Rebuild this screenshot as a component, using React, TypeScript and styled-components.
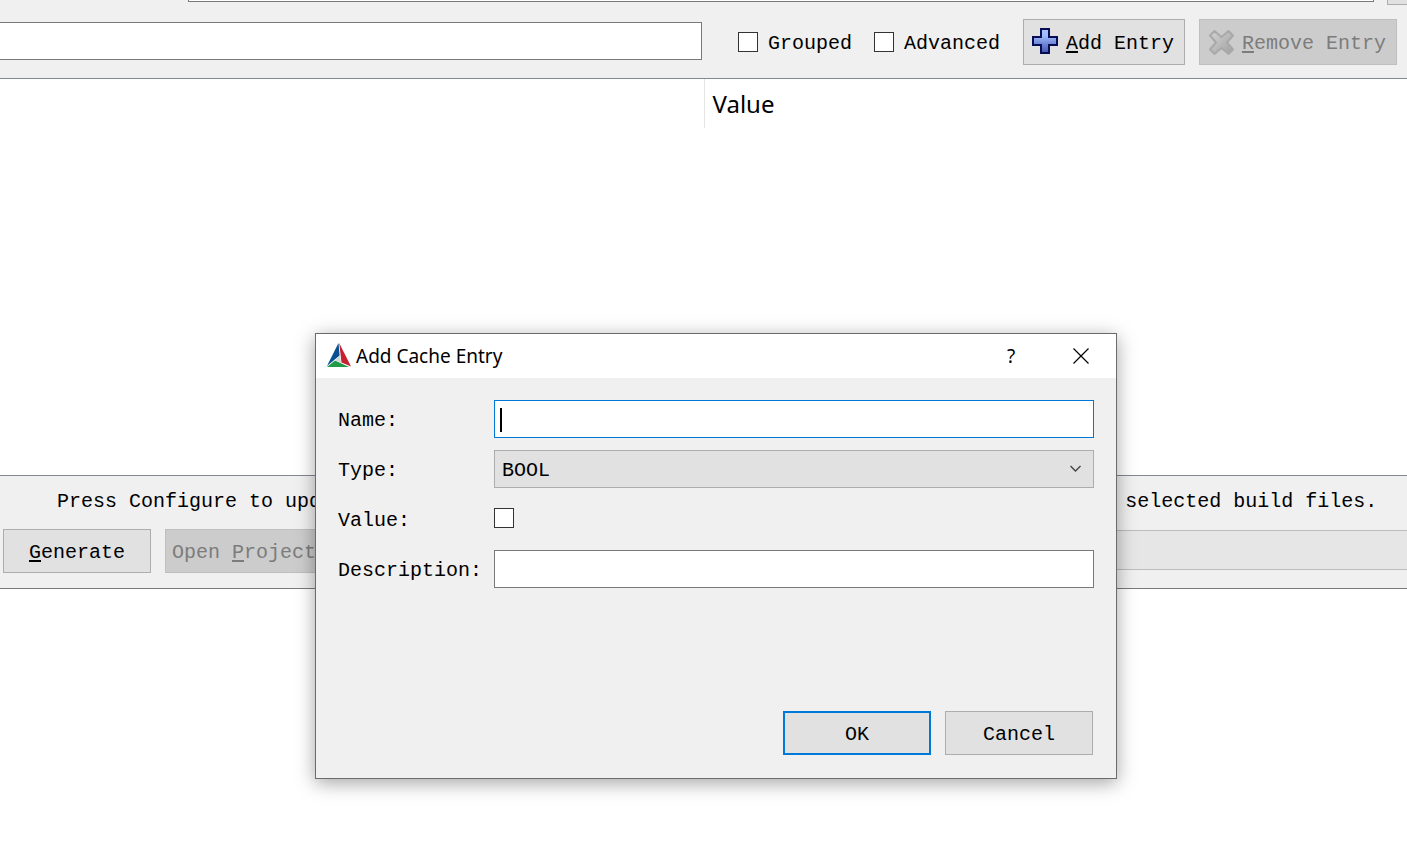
import React from 'react';
import styled, { createGlobalStyle, css } from 'styled-components';

const mono = '"Liberation Mono", monospace';
const sans = '"Noto Sans", sans-serif';

const GlobalStyle = createGlobalStyle`
  *, *::before, *::after { box-sizing: border-box; }
  html, body, #root { height: 100%; }
  body {
    margin: 0;
    background: #fff;
    color: #000;
    font: 20px/24px ${mono};
    overflow: hidden;
  }
  button, input, select { font: inherit; color: inherit; margin: 0; border-radius: 0; }
`;

const Window = styled.main`
  display: flex;
  flex-direction: column;
  min-height: 100%;
  background: #fff;
`;

const PathRow = styled.div`
  display: flex;
  align-items: flex-start;
  gap: 13px;
  padding-left: 188px;
  background: #f0f0f0;
`;

const PathInput = styled.input`
  flex: 1;
  min-width: 0;
  height: 2px;
  padding: 0;
  border: 1px solid #7a7a7a;
  border-top: 0;
  background: #fff;
  outline: none;
`;

const BrowseButton = styled.button`
  width: 20px;
  height: 5px;
  padding: 0;
  border: solid #adadad;
  border-width: 0 0 1px 1px;
  background: #e1e1e1;
`;

const Toolbar = styled.div`
  display: flex;
  align-items: center;
  padding: 14px 10px 13px 0;
  background: #f0f0f0;
`;

const field = css`
  height: 38px;
  border: 1px solid #7a7a7a;
  background: #fff;
  padding: 0 6px;
  outline: none;
`;

const SearchInput = styled.input`
  ${field}
  flex: 1;
  min-width: 0;
  border-left: 0;
  margin: 0 36px 2px 0;
`;

const Checks = styled.div`
  display: flex;
  gap: 22px;
  margin-right: 23px;
`;

const CheckLabel = styled.label`
  display: flex;
  align-items: center;
  gap: 10px;
`;

const CheckText = styled.span`
  padding-top: 4px;
`;

const Checkbox = styled.input.attrs({ type: 'checkbox' })`
  appearance: none;
  flex: none;
  width: 20px;
  height: 20px;
  border: 1px solid #333;
  background: #fff;
  &:checked { background: #0078d7; }
`;

const Actions = styled.div`
  display: flex;
  gap: 14px;
`;

const Button = styled.button<{ $primary?: boolean; $tool?: boolean }>`
  display: flex;
  align-items: center;
  justify-content: center;
  gap: 8px;
  flex: none;
  min-width: 148px;
  height: ${(p) => (p.$tool ? '46px' : '44px')};
  padding: ${(p) => (p.$tool ? '0 10px 0 8px' : '0 6px')};
  border: ${(p) => (p.$primary ? '2px solid #0078d7' : '1px solid #adadad')};
  background: #e1e1e1;
  white-space: nowrap;
  &:disabled {
    border-color: #bfbfbf;
    background: #ccc;
    color: #7c7c7c;
  }
`;

const ButtonText = styled.span`
  padding-top: 4px;
  u {
    text-decoration-thickness: 2px;
    text-underline-offset: 2px;
  }
`;

const Table = styled.table`
  width: 100%;
  border-top: 1px solid #828790;
  border-spacing: 0;
  table-layout: fixed;
`;

const HeadCell = styled.th<{ $divided?: boolean }>`
  width: 50%;
  height: 49px;
  padding: 0 8px;
  border-left: ${(p) => (p.$divided ? '1px solid #e5e5e5' : '0')};
  font: 24px/32px ${sans};
  text-align: left;
`;

const CacheView = styled.section`
  height: 397px;
`;

const Footer = styled.section`
  display: flex;
  flex-direction: column;
  gap: 15px;
  padding: 14px 0 15px 3px;
  border: solid #828790;
  border-width: 1px 0;
  border-bottom-color: #7a7a7a;
  background: #f0f0f0;
`;

const Hint = styled.p`
  margin: 0 0 0 54px;
  white-space: nowrap;
`;

const FooterRow = styled.div`
  display: flex;
  align-items: center;
  gap: 14px;
`;

const Progress = styled.div`
  flex: 1;
  height: 40px;
  margin-bottom: 2px;
  border: 1px solid #bcbcbc;
  border-right: 0;
  background: #e6e6e6;
`;

const Output = styled.section`
  flex: 1;
  background: #fff;
`;

const Dialog = styled.section`
  position: absolute;
  left: 315px;
  top: 333px;
  width: 802px;
  border: 1px solid #6b6b6b;
  background: #f0f0f0;
  box-shadow: 0 4px 18px rgba(0, 0, 0, 0.36);
`;

const TitleBar = styled.header`
  display: flex;
  align-items: center;
  height: 44px;
  padding-left: 11px;
  background: #fff;
`;

const Title = styled.h1`
  flex: 1;
  margin: 0 0 0 5px;
  font: 19px/24px ${sans};
`;

const TitleButton = styled.button`
  display: flex;
  align-items: center;
  justify-content: center;
  width: 70px;
  height: 44px;
  padding: 0;
  border: 0;
  background: transparent;
  font: 19px/24px ${sans};
`;

const Form = styled.form`
  padding: 22px 22px 23px;
`;

const Fields = styled.div`
  display: grid;
  grid-template-columns: auto 1fr;
  grid-auto-rows: 38px;
  gap: 12px;
  align-items: center;
`;

const FieldLabel = styled.label`
  padding-top: 4px;
`;

const FieldBox = styled.div`
  position: relative;
  display: flex;
  align-items: center;
  height: 38px;
`;

const TickBox = styled(FieldBox)`
  padding-bottom: 2px;
`;

const TextInput = styled.input<{ $active?: boolean }>`
  ${field}
  width: 100%;
  ${(p) => p.$active && 'border-color: #0078d7; caret-color: transparent;'}
`;

const Caret = styled.span`
  position: absolute;
  left: 6px;
  top: 8px;
  width: 2px;
  height: 24px;
  background: #000;
`;

const Select = styled.select`
  appearance: none;
  width: 100%;
  height: 38px;
  padding: 3px 30px 0 7px;
  border: 1px solid #adadad;
  background: #e1e1e1;
  outline: none;
`;

const Chevron = styled.svg`
  position: absolute;
  right: 12px;
  top: 15px;
  pointer-events: none;
`;

const DialogActions = styled.div`
  display: flex;
  justify-content: flex-end;
  gap: 14px;
  margin: 123px 1px 0 0;
`;

const PlusIcon = () => (
  <svg width="26" height="28" viewBox="0 0 26 28" aria-hidden="true">
    <defs>
      <linearGradient id="plusFill" x1="0" y1="0" x2="0" y2="1">
        <stop offset="0" stopColor="#a9c4ff" />
        <stop offset="0.3" stopColor="#9bb9fb" />
        <stop offset="0.6" stopColor="#7389d8" />
        <stop offset="1" stopColor="#4254ac" />
      </linearGradient>
    </defs>
    <path
      d="M9 1h8v8h8v8h-8v8H9v-8H1V9h8z"
      fill="url(#plusFill)"
      stroke="#050d55"
      strokeWidth="2"
    />
  </svg>
);

const CrossIcon = () => (
  <svg width="26" height="28" viewBox="0 0 26 28" aria-hidden="true">
    <defs>
      <linearGradient id="crossFill" x1="0" y1="0" x2="1" y2="1">
        <stop offset="0" stopColor="#d2d2d2" />
        <stop offset="0.5" stopColor="#bababa" />
        <stop offset="1" stopColor="#a0a0a0" />
      </linearGradient>
    </defs>
    <path
      d="M6.500 3 13.500 9 20.500 3 25 7.500 19 14.500 25 21.500 20.500 26 13.500 20 6.500 26 2 21.500 8 14.500 2 7.500z"
      fill="url(#crossFill)"
      stroke="#a9a9a9"
      strokeWidth="2"
      strokeLinejoin="round"
    />
  </svg>
);

const Logo = () => (
  <svg width="24" height="26" viewBox="0 0 24 26" aria-hidden="true">
    <path d="M11.500 0 12.600 12.500 0 23z" fill="#064f91" />
    <path d="M12.200 0 24 23.500 14.500 19.500z" fill="#c7202f" />
    <path d="M8 17.500 22 24H0z" fill="#229a48" />
    <path d="M12.800 12.500 14.200 20 8.300 17.200z" fill="#d5d5d8" />
  </svg>
);

export default function App() {
  return (
    <>
      <GlobalStyle />
      <Window>
        <PathRow>
          <PathInput aria-label="Build path" />
          <BrowseButton aria-label="Browse" />
        </PathRow>
        <Toolbar>
          <SearchInput aria-label="Search" />
          <Checks>
            <CheckLabel>
              <Checkbox />
              <CheckText>Grouped</CheckText>
            </CheckLabel>
            <CheckLabel>
              <Checkbox />
              <CheckText>Advanced</CheckText>
            </CheckLabel>
          </Checks>
          <Actions>
            <Button $tool>
              <PlusIcon />
              <ButtonText><u>A</u>dd Entry</ButtonText>
            </Button>
            <Button $tool disabled>
              <CrossIcon />
              <ButtonText><u>R</u>emove Entry</ButtonText>
            </Button>
          </Actions>
        </Toolbar>
        <CacheView>
          <Table>
            <thead>
              <tr>
                <HeadCell aria-label="Name" />
                <HeadCell $divided>Value</HeadCell>
              </tr>
            </thead>
          </Table>
        </CacheView>
        <Footer>
          <Hint>
            Press Configure to update and display new values in red, then press Generate to
            generate selected build files.
          </Hint>
          <FooterRow>
            <Button><ButtonText><u>G</u>enerate</ButtonText></Button>
            <Button disabled><ButtonText>Open <u>P</u>roject</ButtonText></Button>
            <Progress role="progressbar" aria-label="Progress" />
          </FooterRow>
        </Footer>
        <Output />
      </Window>

      <Dialog role="dialog" aria-labelledby="dialog-title">
        <TitleBar>
          <Logo />
          <Title id="dialog-title">Add Cache Entry</Title>
          <TitleButton aria-label="Help">?</TitleButton>
          <TitleButton aria-label="Close">
            <svg width="16" height="16" viewBox="0 0 16 16" aria-hidden="true">
              <path d="M.5.5l15 15M15.5.5l-15 15" stroke="#000" strokeWidth="1.2" />
            </svg>
          </TitleButton>
        </TitleBar>
        <Form onSubmit={(e) => e.preventDefault()}>
          <Fields>
            <FieldLabel htmlFor="entry-name">Name:</FieldLabel>
            <FieldBox>
              <TextInput id="entry-name" $active />
              <Caret />
            </FieldBox>
            <FieldLabel htmlFor="entry-type">Type:</FieldLabel>
            <FieldBox>
              <Select id="entry-type" defaultValue="BOOL">
                <option>BOOL</option>
                <option>PATH</option>
                <option>FILEPATH</option>
                <option>STRING</option>
              </Select>
              <Chevron width="13" height="8" viewBox="0 0 13 8" aria-hidden="true">
                <path d="M1.5 1l5 5 5-5" fill="none" stroke="#444" strokeWidth="1.4" />
              </Chevron>
            </FieldBox>
            <FieldLabel htmlFor="entry-value">Value:</FieldLabel>
            <TickBox>
              <Checkbox id="entry-value" />
            </TickBox>
            <FieldLabel htmlFor="entry-description">Description:</FieldLabel>
            <FieldBox>
              <TextInput id="entry-description" />
            </FieldBox>
          </Fields>
          <DialogActions>
            <Button type="submit" $primary><ButtonText>OK</ButtonText></Button>
            <Button type="button"><ButtonText>Cancel</ButtonText></Button>
          </DialogActions>
        </Form>
      </Dialog>
    </>
  );
}
